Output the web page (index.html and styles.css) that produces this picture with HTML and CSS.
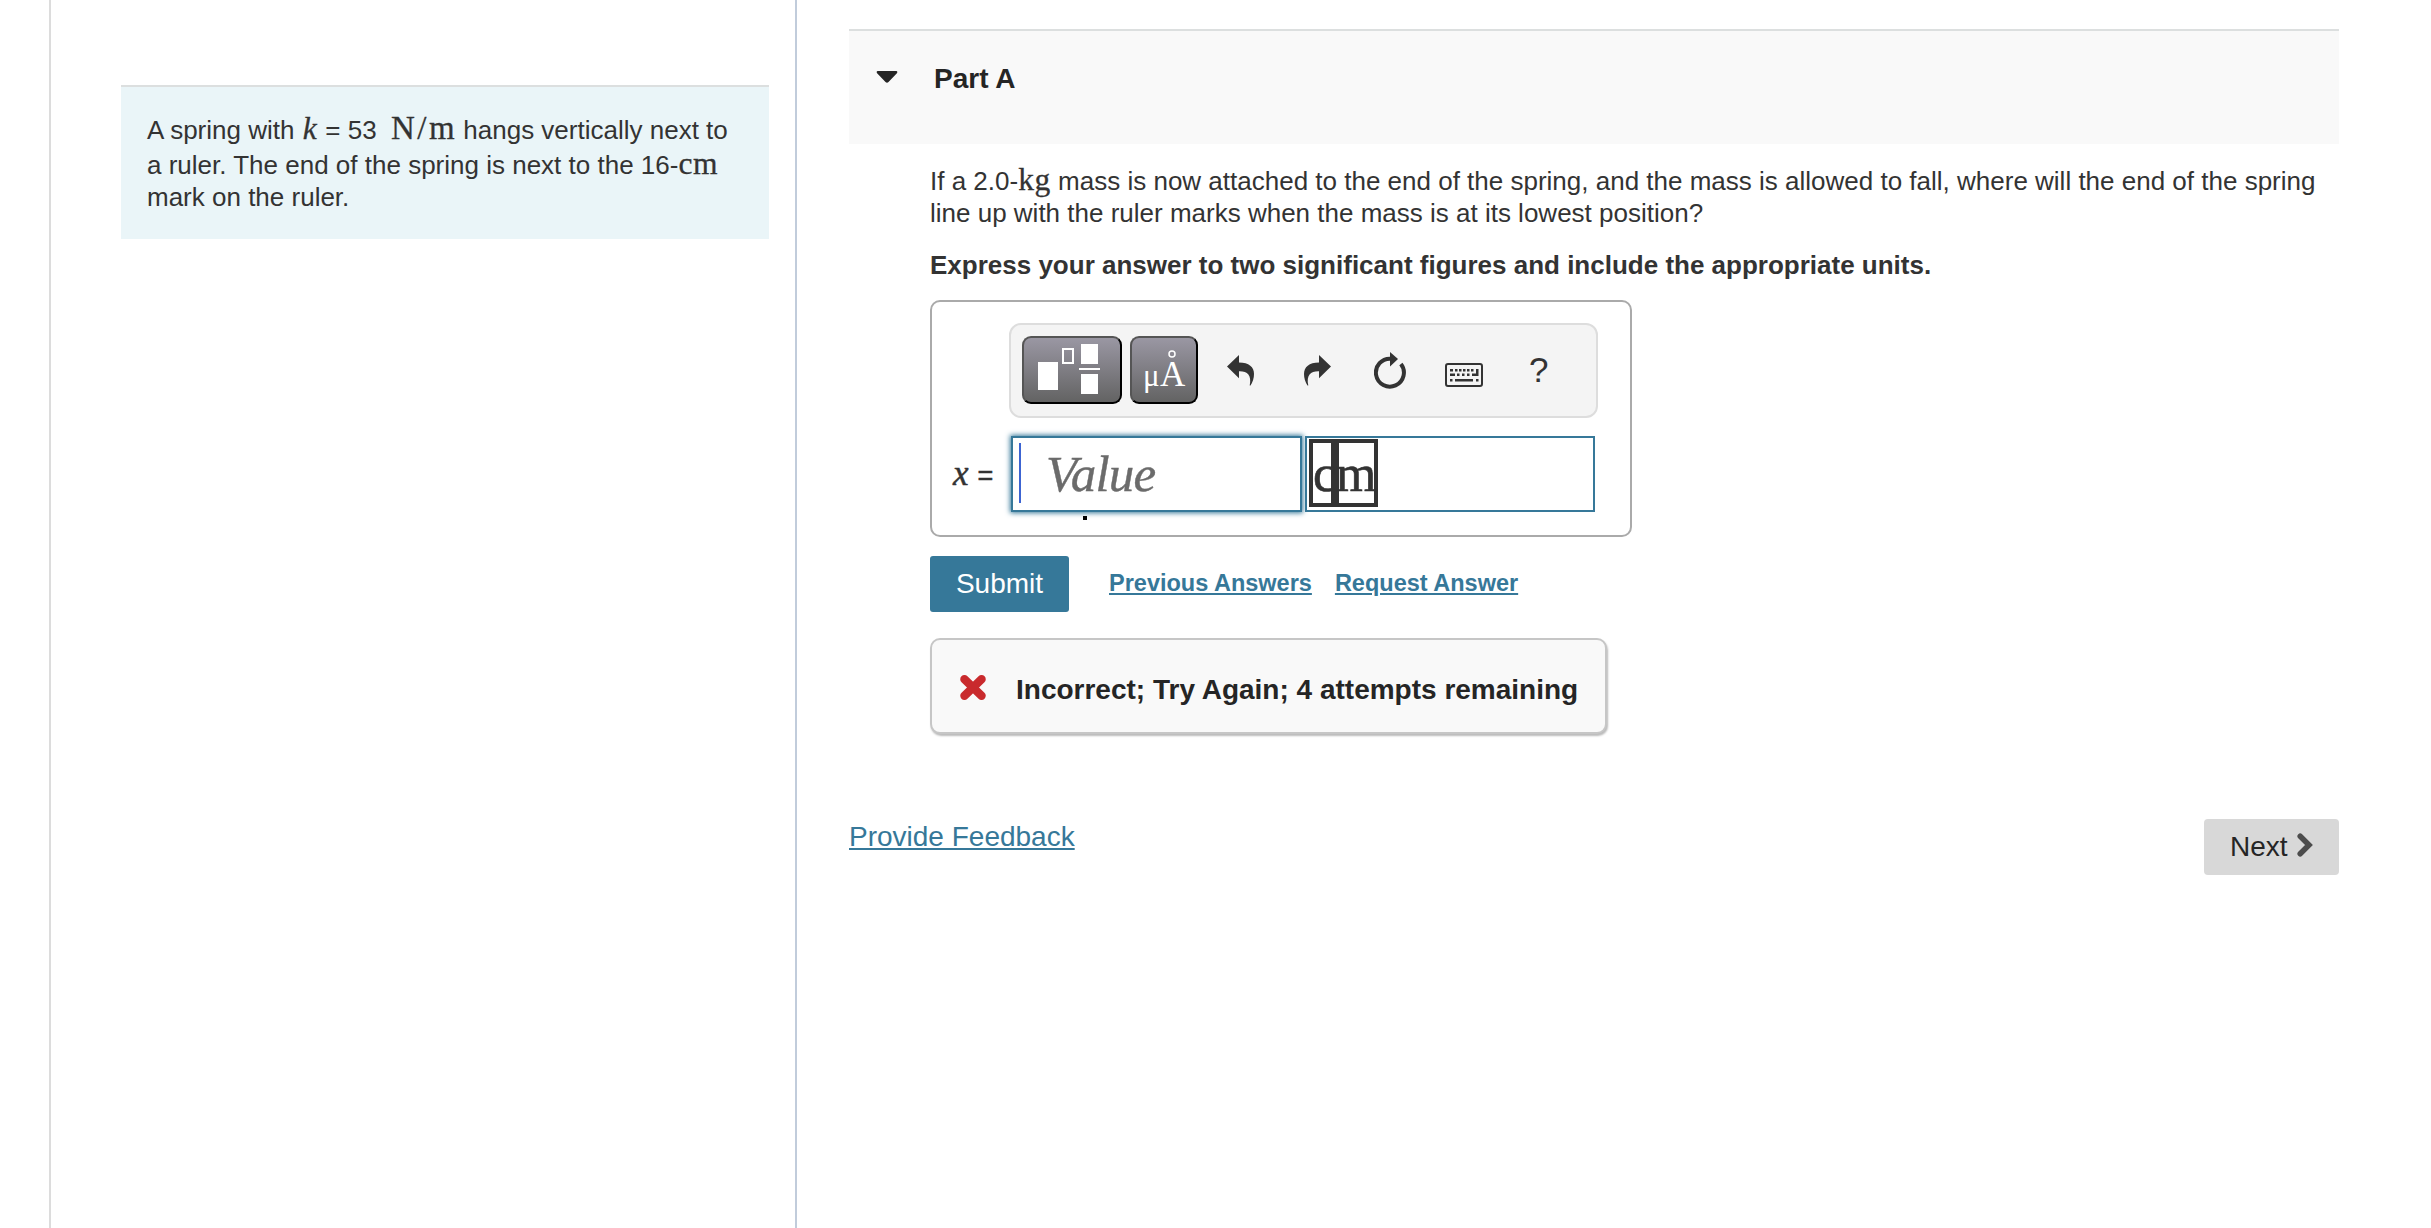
FILE: index.html
```
<!DOCTYPE html>
<html lang="en">
<head>
  <meta charset="UTF-8" />
  <meta name="viewport" content="width=device-width, initial-scale=1.0"/>
  <title>Part A</title>
  <link rel="stylesheet" href="styles.css">
</head>
<body>
  <div class="page">
    <aside class="sidebar">
      <div class="intro">
        <div class="line intro-1">A spring with <i class="math math-k">k</i> = 53 <span class="math math-unit">N/m</span> hangs vertically next to</div>
        <div class="line intro-2">a ruler. The end of the spring is next to the 16-<span class="math">cm</span></div>
        <div class="line intro-3">mark on the ruler.</div>
      </div>
    </aside>

    <main class="content">
      <header class="part-header">
        <svg class="arrow" width="22" height="12" viewBox="0 0 22 12"><path d="M1.5 0h19q1.5.8.4 2.2l-8.400 8.800q-1.500 1.600-3 0L1.100 2.200Q0 .8 1.500 0z" fill="#252525"/></svg>
        <h2>Part A</h2>
      </header>

      <section class="question">
        <div class="line q-1">If a 2.0-<span class="math math-kg">kg</span> mass is now attached to the end of the spring, and the mass is allowed to fall, where will the end of the spring</div>
        <div class="line q-2">line up with the ruler marks when the mass is at its lowest position?</div>
        <div class="line instructions">Express your answer to two significant figures and include the appropriate units.</div>

        <div class="answer-box">
          <div class="toolbar">
            <button class="tool templates">
              <svg width="96" height="64" viewBox="0 0 96 64">
                <path fill="#fff" d="M14 24h20v28H14zM57 6h17v20H57zM57 36h17v20H57zM55 30h21v2H55z"/>
                <path fill="none" stroke="#fff" stroke-width="2" d="M39 11h10v14H39z"/>
              </svg>
            </button>
            <button class="tool units">
              <svg width="64" height="64" viewBox="0 0 64 64">
                <text x="11" y="48" class="units-text">μ</text>
                <text x="28" y="48" class="units-text units-a">A</text>
                <circle cx="40" cy="16" r="3" fill="none" stroke="#fff" stroke-width="1.500"/>
              </svg>
            </button>
            <svg class="icon undo" width="27" height="31" viewBox="0 0 27 31"><path d="M12 0v7.500C22 7.500 27 12 27 19q0 6-3.500 11.500h-.8C25 20 20 16 12 16.300v6.900L0 11.600z"/></svg>
            <svg class="icon redo" width="27" height="31" viewBox="0 0 27 31"><path d="M15 0v7.500C5 7.500 0 12 0 19q0 6 3.500 11.500h.8C2 20 7 16 15 16.300v6.900L27 11.600z"/></svg>
            <svg class="icon reset" width="32" height="37" viewBox="0 0 32 37">
              <path fill="none" stroke="#333" stroke-width="4" d="M17 6.700A14 14 0 1 0 26.900 12"/>
              <path d="M16 0l8 7-8 7.500z"/>
            </svg>
            <svg class="icon keyboard" width="38" height="24" viewBox="0 0 38 24">
              <rect x="1" y="1" width="36" height="22" rx="2" fill="none" stroke="#333" stroke-width="2"/>
              <path d="M5 6h3v2.500H5zM10 6h2.500v2.500H10zM14 6h2.500v2.500H14zM18 6h2.500v2.500H18zM22 6h2.500v2.500H22zM26 6h2.500v2.500H26zM31 6h2.500v7H27v-2.500h4zM5 10.500h5V13H5zM12 10.500h2.500V13H12zM17 10.500h2.500V13H17zM22 10.500h2.500V13H22zM5 16h2.500v2.500H5zM10 16h18v2.500H10zM31 16h2.500v2.500H31z"/>
            </svg>
            <span class="help">?</span>
          </div>

          <div class="fields">
            <div class="label"><i>x</i><b>=</b></div>
            <div class="field value-field">
              <span class="caret"></span>
              <span class="placeholder">Value</span>
              <span class="dot"></span>
            </div>
            <div class="field units-field">
              <span class="cell cell-c">c</span><span class="cell cell-m">m</span>
            </div>
          </div>
        </div>

        <div class="actions">
          <button class="submit">Submit</button>
          <a class="previous" href="#">Previous Answers</a>
          <a class="request" href="#">Request Answer</a>
        </div>

        <div class="feedback">
          <svg width="28" height="27" viewBox="0 0 28 27"><path d="M5.500 5.300L22.500 21.700M22.500 5.300L5.500 21.700" stroke="#c92a2d" stroke-width="8.500" stroke-linecap="round"/></svg>
          <span>Incorrect; Try Again; 4 attempts remaining</span>
        </div>
      </section>

      <footer class="footer">
        <a class="provide" href="#">Provide Feedback</a>
        <button class="next"><span>Next</span>
          <svg width="16" height="24" viewBox="0 0 16 24"><path d="M3.200 3.200L12 12l-8.800 8.800" fill="none" stroke="#4c4c4c" stroke-width="5.500" stroke-linecap="round"/></svg>
        </button>
      </footer>
    </main>
  </div>
</body>
</html>
```
FILE: styles.css
```
* {
  box-sizing: border-box;
}

body {
  margin: 0;
  background: #fff;
  color: #333;
  font-family: "Liberation Sans", Arial, sans-serif;
  font-size: 26px;
  overflow: hidden;
}

button {
  font-family: inherit;
  padding: 0;
}

a {
  color: #367899;
  text-decoration: underline;
  text-decoration-thickness: 2px;
  text-underline-offset: 2px;
}

.page {
  display: flex;
  height: 1228px;
  margin-left: 49px;
  border-left: 2px solid #dcdcdc;
}

.sidebar {
  width: 746px;
  padding: 85px 27px 0 70px;
  border-right: 2px solid #c1ccdb;
}

.intro {
  width: 648px;
  height: 154px;
  padding: 26px 0 0 26px;
  background: #eaf5f8;
  border-top: 2px solid #dcdfdf;
}

.line {
  white-space: nowrap;
  line-height: 32px;
}

.intro-1 {
  line-height: 35px;
}

.intro-2 {
  line-height: 34px;
}

.intro-3 {
  margin-top: -1px;
}

.math {
  font-family: "Liberation Serif", "Times New Roman", serif;
  font-size: 31.5px;
  line-height: 0;
  letter-spacing: 0.5px;
  -webkit-text-stroke: 0.3px #333;
}

.math-kg {
  letter-spacing: 0.6px;
}

.math-k {
  margin-left: 1px;
  margin-right: 1px;
}

.math-unit {
  font-size: 33px;
  letter-spacing: 2.5px;
  margin-left: 7px;
  margin-right: -1px;
}

/* right column */
.content {
  width: 1542px;
  padding: 29px 0 0 52px;
}

.part-header {
  display: flex;
  align-items: flex-start;
  height: 115px;
  padding: 40px 0 0 27px;
  background: #f9f9f9;
  border-top: 2px solid #dcdfdf;
}

.part-header h2 {
  margin: -8px 0 0 36px;
  font-size: 28px;
  line-height: 32px;
  color: #252525;
}

.question {
  padding: 21px 0 0 81px;
}

.instructions {
  margin-top: 20px;
  font-weight: bold;
}

.answer-box {
  width: 702px;
  height: 237px;
  margin-top: 19px;
  padding: 21px 0 0 19px;
  border: 2px solid #aaa;
  border-radius: 10px;
}

.toolbar {
  display: flex;
  align-items: flex-start;
  width: 589px;
  height: 95px;
  margin-left: 58px;
  padding: 11px 0 0 11px;
  background: #f4f4f4;
  border: 2px solid #ddd;
  border-radius: 12px;
}

.tool {
  height: 68px;
  border: 2px solid;
  border-color: #555 #000 #000 #555;
  border-radius: 9px;
  background: linear-gradient(#9a97a3, #636363);
}

.tool svg {
  display: block;
}

.templates {
  width: 100px;
}

.units {
  width: 68px;
  margin-left: 8px;
}

.units-text {
  font-family: "Liberation Serif", "Times New Roman", serif;
  font-size: 31px;
  fill: #fff;
}

.units-a {
  font-size: 35px;
}

.icon {
  fill: #333;
}

.undo {
  margin: 19px 0 0 29px;
}

.redo {
  margin: 19px 0 0 50px;
}

.reset {
  margin: 16px 0 0 43px;
}

.keyboard {
  margin: 27px 0 0 39px;
}

.help {
  margin: 14px 0 0 46px;
  font-size: 35px;
  line-height: 40px;
}

.fields {
  display: flex;
  margin-top: 18px;
}

.label {
  width: 60px;
  padding: 22px 0 0 2px;
  line-height: 36px;
  white-space: nowrap;
}

.label i {
  font-family: "Liberation Serif", "Times New Roman", serif;
  font-size: 35px;
  line-height: 0;
  -webkit-text-stroke: 0.5px #333;
}

.label b {
  margin-left: 9px;
  font-size: 27px;
  font-weight: normal;
  -webkit-text-stroke: 0.6px #333;
}

.field {
  position: relative;
  height: 76px;
  border: 2px solid #367899;
  background: #fff;
  font-family: "Liberation Serif", "Times New Roman", serif;
  font-size: 52px;
}

.value-field {
  display: flex;
  width: 291px;
  padding: 5px 0 0 6px;
  box-shadow: 0 0 5px 1px #367899;
}

.caret {
  width: 2px;
  height: 60px;
  background: #3c64d2;
}

.placeholder {
  margin-left: 25px;
  font-size: 51px;
  font-style: italic;
  line-height: 62px;
  letter-spacing: -0.8px;
  color: #6b6b6b;
  -webkit-text-stroke: 0.4px #6b6b6b;
}

/* stray dot hanging below the field */
.dot {
  position: absolute;
  left: 70px;
  top: 78px;
  width: 4px;
  height: 4px;
  background: #000;
}

.units-field {
  display: flex;
  width: 290px;
  margin-left: 3px;
  padding: 1px 0 0 2px;
}

.cell {
  height: 68px;
  border: 4px solid #333;
  line-height: 61px;
  -webkit-text-stroke: 0.6px #333;
}

.cell-c {
  width: 26px;
}

.cell-m {
  width: 43px;
  text-indent: -3px;
}

.actions {
  display: flex;
  align-items: flex-start;
  margin-top: 19px;
  font-size: 23.5px;
  font-weight: bold;
  line-height: 28px;
}

.submit {
  width: 139px;
  height: 56px;
  border: 0;
  border-radius: 3px;
  background: #367899;
  color: #fff;
  font-size: 28px;
}

.previous {
  margin: 13px 0 0 40px;
}

.request {
  margin: 13px 0 0 23px;
}

.feedback {
  display: flex;
  align-items: flex-start;
  width: 677px;
  height: 96px;
  margin-top: 26px;
  padding: 34px 0 0 27px;
  border: 2px solid #c6c6c6;
  border-radius: 10px;
  background: #f9f9f9;
  box-shadow: 1px 2px 2px #bbb;
  color: #252525;
  font-size: 28px;
  font-weight: bold;
  line-height: 32px;
  white-space: nowrap;
}

.feedback span {
  margin-left: 29px;
}

.footer {
  display: flex;
  justify-content: space-between;
  align-items: flex-start;
  margin-top: 85px;
  font-size: 28px;
}

.provide {
  line-height: 36px;
}

.next {
  display: flex;
  align-items: center;
  width: 135px;
  height: 56px;
  padding-left: 26px;
  border: 0;
  border-radius: 4px;
  background: #d8d8d8;
  color: #252525;
  font-size: 28px;
}

.next svg {
  margin: -4px 0 0 9px;
}
```
